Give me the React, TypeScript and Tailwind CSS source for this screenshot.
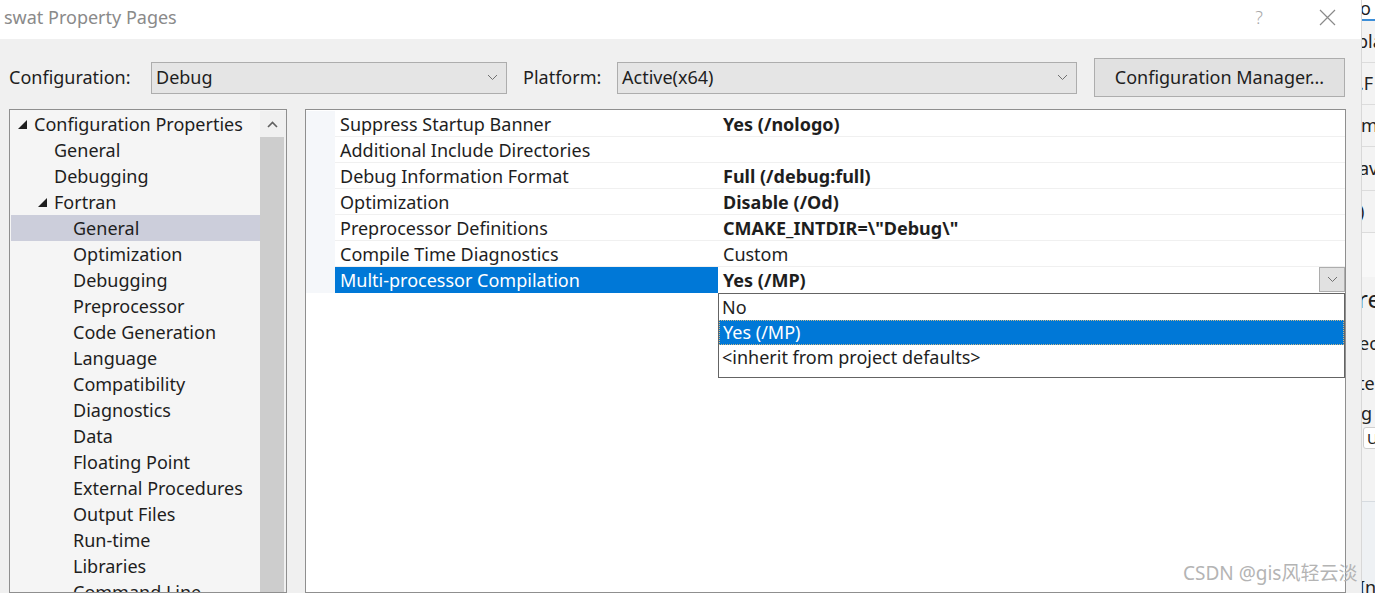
import React from 'react';

const TREE = [
  { label: 'Configuration Properties', level: 0, open: true },
  { label: 'General', level: 1 },
  { label: 'Debugging', level: 1 },
  { label: 'Fortran', level: 1, open: true },
  { label: 'General', level: 2, selected: true },
  { label: 'Optimization', level: 2 },
  { label: 'Debugging', level: 2 },
  { label: 'Preprocessor', level: 2 },
  { label: 'Code Generation', level: 2 },
  { label: 'Language', level: 2 },
  { label: 'Compatibility', level: 2 },
  { label: 'Diagnostics', level: 2 },
  { label: 'Data', level: 2 },
  { label: 'Floating Point', level: 2 },
  { label: 'External Procedures', level: 2 },
  { label: 'Output Files', level: 2 },
  { label: 'Run-time', level: 2 },
  { label: 'Libraries', level: 2 },
  { label: 'Command Line', level: 2 },
];

const PROPS = [
  { name: 'Suppress Startup Banner', value: 'Yes (/nologo)', bold: true },
  { name: 'Additional Include Directories', value: '', bold: false },
  { name: 'Debug Information Format', value: 'Full (/debug:full)', bold: true },
  { name: 'Optimization', value: 'Disable (/Od)', bold: true },
  { name: 'Preprocessor Definitions', value: 'CMAKE_INTDIR=\\"Debug\\"', bold: true },
  { name: 'Compile Time Diagnostics', value: 'Custom', bold: false },
  { name: 'Multi-processor Compilation', value: 'Yes (/MP)', bold: true, selected: true },
];

function Chevron({ up = false }: { up?: boolean }) {
  return (
    <svg width="11" height="7" viewBox="0 0 11 7" className="shrink-0">
      <polyline
        points={up ? '1,6 5.5,1.5 10,6' : '1,1 5.5,5.5 10,1'}
        fill="none"
        stroke={up ? '#606060' : '#707070'}
        strokeWidth={up ? 1.6 : 1}
      />
    </svg>
  );
}

function Triangle() {
  return (
    <svg width="9" height="9" viewBox="0 0 9 9" className="shrink-0">
      <polygon points="9,0 9,9 0,9" fill="#1e1e1e" />
    </svg>
  );
}

function Select({ value, width }: { value: string; width: string }) {
  return (
    <div className={`${width} h-[32px] flex items-center justify-between bg-[#e5e5e5] border border-[#adadad] pl-[4px] pr-[8px]`}>
      <span>{value}</span>
      <Chevron />
    </div>
  );
}

export default function App() {
  return (
    <div className="w-[1375px] h-[593px] overflow-hidden relative flex bg-white font-['Noto_Sans',sans-serif] text-[18px] text-[#1e1e1e]">
      {/* Dialog */}
      <div className="w-[1361px] h-full flex flex-col">
        {/* Title bar */}
        <div className="h-[39px] shrink-0 bg-white flex items-center pl-[4px]">
          <span className="text-[#8a8a8a] text-[18px] -mt-[4px]">swat Property Pages</span>
          <div className="ml-auto flex items-center gap-[56px] pr-[25px] -mt-[4px]">
            <span className="text-[#a8a8a8] text-[18px] font-light">?</span>
            <svg width="17" height="17" viewBox="0 0 17 17">
              <path d="M1 1 L16 16 M16 1 L1 16" stroke="#8a8a8a" strokeWidth="1.2" />
            </svg>
          </div>
        </div>

        {/* Body */}
        <div className="flex-1 bg-[#f0f0f0] pt-[19px] pl-[9px] pr-[15px] flex flex-col min-h-0">
          <div className="h-[39px] shrink-0 flex items-center">
            <span className="w-[142px]">Configuration:</span>
            <Select value="Debug" width="w-[356px]" />
            <span className="ml-[16px] w-[94px]">Platform:</span>
            <Select value="Active(x64)" width="w-[460px]" />
            <button className="ml-[17px] w-[251px] h-[39px] bg-[#e1e1e1] border border-[#adadad] text-[18px]">
              Configuration Manager...
            </button>
          </div>

          <div className="mt-[12px] flex-1 flex min-h-0 gap-[18px]">
            {/* Tree */}
            <div className="w-[278px] shrink-0 border border-[#8f8f8f] bg-[#f5f5f5] flex pl-[1px] pt-[1px] overflow-hidden">
              <div className="flex-1 flex flex-col">
                {TREE.map((t, i) => (
                  <div
                    key={i}
                    className={`h-[26px] shrink-0 flex items-center whitespace-nowrap ${t.selected ? 'bg-[#cccedb]' : ''}`}
                  >
                    <div
                      className={`flex items-center ${
                        t.level === 0 ? 'pl-[7px]' : t.level === 1 ? (t.open ? 'pl-[27px]' : 'pl-[43px]') : 'pl-[62px]'
                      }`}
                    >
                      {t.open && (
                        <span className="w-[16px] flex items-center">
                          <Triangle />
                        </span>
                      )}
                      <span className="leading-[26px]">{t.label}</span>
                    </div>
                  </div>
                ))}
              </div>
              <div className="w-[26px] shrink-0 flex flex-col bg-[#f0f0f0] pr-[2px]">
                <div className="h-[26px] shrink-0 flex items-center justify-center">
                  <Chevron up />
                </div>
                <div className="flex-1 bg-[#cdcdcd]" />
              </div>
            </div>

            {/* Property grid */}
            <div className="w-[1041px] shrink-0 border border-[#8f8f8f] bg-white relative pt-[1px]">
              {PROPS.map((p, i) => (
                <div key={i} className="h-[26px] flex whitespace-nowrap">
                  <div className="w-[29px] shrink-0 bg-[#f5f7fa]" />
                  <div
                    className={`w-[383px] shrink-0 pl-[5px] leading-[26px] border-b ${
                      p.selected ? 'bg-[#0078d7] text-white border-[#0078d7]' : 'border-[#f0f0f0]'
                    }`}
                  >
                    {p.name}
                  </div>
                  <div
                    className={`flex-1 pl-[5px] leading-[26px] flex items-start ${
                      p.selected ? '' : 'border-b border-[#f0f0f0]'
                    } ${p.bold ? 'font-bold' : ''}`}
                  >
                    <span>{p.value}</span>
                    {p.selected && (
                      <div className="ml-auto w-[26px] h-[25px] bg-[#e1e1e1] border border-[#adadad] flex items-center justify-center">
                        <Chevron />
                      </div>
                    )}
                  </div>
                </div>
              ))}

              {/* Open dropdown list */}
              <div className="absolute left-[412px] top-[183px] w-[627px] h-[85px] bg-white border border-[#646464] pt-[1px] whitespace-nowrap">
                <div className="h-[25px] pl-[3px] leading-[25px]">No</div>
                <div className="h-[25px] pl-[3px] leading-[23px] bg-[#0078d7] text-white border border-dotted border-[#c8b88a]">
                  Yes (/MP)
                </div>
                <div className="h-[25px] pl-[3px] leading-[25px]">&lt;inherit from project defaults&gt;</div>
              </div>
            </div>
          </div>
        </div>
      </div>

      {/* Background window peeking at the right */}
      <div className="w-[14px] h-full shrink-0 overflow-hidden flex flex-col bg-[#f3f3f3] border-l border-[#d8d8d8] text-[18px] text-[#222] whitespace-nowrap">
        <div className="h-[21px] shrink-0 bg-white border-b-2 border-[#3c8ed8] -ml-[2px] leading-[16px]">o</div>
        <div className="h-[42px] shrink-0 border-b border-[#dcdcdc] -ml-[5px] flex items-center">pla</div>
        <div className="h-[42px] shrink-0 border-b border-[#dcdcdc] -ml-[3px] flex items-center">.F</div>
        <div className="h-[42px] shrink-0 border-b border-[#dcdcdc] -ml-[1px] flex items-center">m</div>
        <div className="h-[44px] shrink-0 border-b border-[#dcdcdc] -ml-[3px] flex items-center">av</div>
        <div className="h-[42px] shrink-0 border-b border-[#dcdcdc] -ml-[3px] flex items-center">)</div>
        <div className="h-[44px] shrink-0 bg-[#f8f8f8]" />
        <div className="h-[44px] shrink-0 -ml-[4px] flex items-center text-[24px]">re</div>
        <div className="h-[44px] shrink-0 -ml-[3px] flex items-center">ec</div>
        <div className="h-[36px] shrink-0 -ml-[4px] flex items-center">te</div>
        <div className="h-[24px] shrink-0 -ml-[1px] flex items-center">g</div>
        <div className="h-[26px] shrink-0 flex items-center pl-[1px]">
          <div className="h-[22px] w-[20px] bg-white border border-[#cfcfcf] rounded-[3px] pl-[3px] text-[15px] leading-[20px]">U</div>
        </div>
        <div className="h-[50px] shrink-0" />
        <div className="flex-1 bg-[#eef1f4] border-t border-[#d6dbe0] -ml-[3px] pt-[72px] leading-[26px]">In</div>
      </div>

      {/* Watermark */}
      <div className="absolute left-[1183px] top-[560px] text-[19px] text-[#b4b4b4] font-['Noto_Sans','Noto_Sans_CJK_SC',sans-serif] leading-[26px] whitespace-nowrap">
        CSDN @gis风轻云淡
      </div>
    </div>
  );
}
